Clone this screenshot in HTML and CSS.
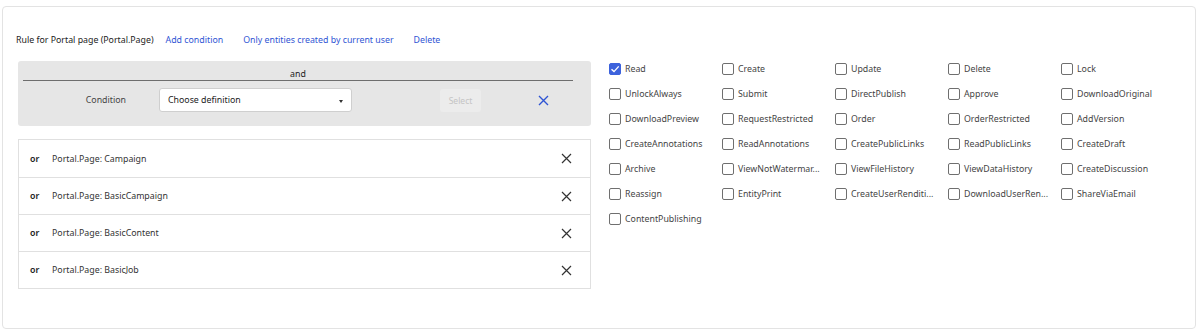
FILE: index.html
```html
<!DOCTYPE html>
<html>
<head>
<meta charset="utf-8">
<link rel="stylesheet" href="styles.css">
</head>
<body>
<div class="card">
  <div class="header">
    <span class="title">Rule for Portal page (Portal.Page)</span>
    <a class="link">Add condition</a>
    <a class="link">Only entities created by current user</a>
    <a class="link">Delete</a>
  </div>
  <div class="main">
    <div class="left">
      <div class="panel">
        <div class="and">and</div>
        <div class="cond-row">
          <span class="cond-label">Condition</span>
          <div class="dropdown"><span>Choose definition</span><span class="caret"></span></div>
          <button class="select-btn">Select</button>
          <svg class="x-blue" width="11" height="11" viewBox="0 0 11 11"><path d="M1 1L10 10M10 1L1 10" stroke="#2f55d4" stroke-width="1.4" fill="none"/></svg>
        </div>
      </div>
      <div class="list">
        <div class="row"><span class="or">or</span><span class="name">Portal.Page: Campaign</span><svg class="x" width="11" height="11" viewBox="0 0 11 11"><path d="M1 1L10 10M10 1L1 10" stroke="#333" stroke-width="1.2" fill="none"/></svg></div>
        <div class="row"><span class="or">or</span><span class="name">Portal.Page: BasicCampaign</span><svg class="x" width="11" height="11" viewBox="0 0 11 11"><path d="M1 1L10 10M10 1L1 10" stroke="#333" stroke-width="1.2" fill="none"/></svg></div>
        <div class="row"><span class="or">or</span><span class="name">Portal.Page: BasicContent</span><svg class="x" width="11" height="11" viewBox="0 0 11 11"><path d="M1 1L10 10M10 1L1 10" stroke="#333" stroke-width="1.2" fill="none"/></svg></div>
        <div class="row"><span class="or">or</span><span class="name">Portal.Page: BasicJob</span><svg class="x" width="11" height="11" viewBox="0 0 11 11"><path d="M1 1L10 10M10 1L1 10" stroke="#333" stroke-width="1.2" fill="none"/></svg></div>
      </div>
    </div>
    <div class="perms">
      <label class="perm"><span class="box checked"><svg width="10" height="10" viewBox="0 0 10 10"><path d="M1.5 5.2L4 7.6L8.7 2.4" stroke="#fff" stroke-width="1.4" fill="none"/></svg></span><span class="lbl">Read</span></label>
      <label class="perm"><span class="box"></span><span class="lbl">Create</span></label>
      <label class="perm"><span class="box"></span><span class="lbl">Update</span></label>
      <label class="perm"><span class="box"></span><span class="lbl">Delete</span></label>
      <label class="perm"><span class="box"></span><span class="lbl">Lock</span></label>
      <label class="perm"><span class="box"></span><span class="lbl">UnlockAlways</span></label>
      <label class="perm"><span class="box"></span><span class="lbl">Submit</span></label>
      <label class="perm"><span class="box"></span><span class="lbl">DirectPublish</span></label>
      <label class="perm"><span class="box"></span><span class="lbl">Approve</span></label>
      <label class="perm"><span class="box"></span><span class="lbl">DownloadOriginal</span></label>
      <label class="perm"><span class="box"></span><span class="lbl">DownloadPreview</span></label>
      <label class="perm"><span class="box"></span><span class="lbl">RequestRestricted</span></label>
      <label class="perm"><span class="box"></span><span class="lbl">Order</span></label>
      <label class="perm"><span class="box"></span><span class="lbl">OrderRestricted</span></label>
      <label class="perm"><span class="box"></span><span class="lbl">AddVersion</span></label>
      <label class="perm"><span class="box"></span><span class="lbl">CreateAnnotations</span></label>
      <label class="perm"><span class="box"></span><span class="lbl">ReadAnnotations</span></label>
      <label class="perm"><span class="box"></span><span class="lbl">CreatePublicLinks</span></label>
      <label class="perm"><span class="box"></span><span class="lbl">ReadPublicLinks</span></label>
      <label class="perm"><span class="box"></span><span class="lbl">CreateDraft</span></label>
      <label class="perm"><span class="box"></span><span class="lbl">Archive</span></label>
      <label class="perm"><span class="box"></span><span class="lbl">ViewNotWatermar...</span></label>
      <label class="perm"><span class="box"></span><span class="lbl">ViewFileHistory</span></label>
      <label class="perm"><span class="box"></span><span class="lbl">ViewDataHistory</span></label>
      <label class="perm"><span class="box"></span><span class="lbl">CreateDiscussion</span></label>
      <label class="perm"><span class="box"></span><span class="lbl">Reassign</span></label>
      <label class="perm"><span class="box"></span><span class="lbl">EntityPrint</span></label>
      <label class="perm"><span class="box"></span><span class="lbl">CreateUserRenditi...</span></label>
      <label class="perm"><span class="box"></span><span class="lbl">DownloadUserRen...</span></label>
      <label class="perm"><span class="box"></span><span class="lbl">ShareViaEmail</span></label>
      <label class="perm"><span class="box"></span><span class="lbl">ContentPublishing</span></label>
    </div>
  </div>
</div>
</body>
</html>
```
FILE: styles.css
```css
* { box-sizing: border-box; }
html, body { margin: 0; padding: 0; background: #fff; }
body {
  font-family: "Noto Sans", "Open Sans", sans-serif;
  font-size: 8.8px;
  color: #333;
}
.card {
  margin: 6px 0 0 2px;
  width: 1194px;
  height: 323px;
  border: 1px solid #e3e3e3;
  border-radius: 4px;
  padding: 25px 15px 0 13px;
}
.header {
  display: flex;
  align-items: center;
  height: 16px;
}
.title { color: #222; margin-right: 12px; }
.link { color: #2f55d4; margin-right: 20px; cursor: pointer; }
.main {
  display: flex;
  margin-top: 13px;
  gap: 18px;
  padding-left: 2px;
}
.left { width: 573px; flex: none; }
.panel {
  background: #e6e6e6;
  border-radius: 3px;
  height: 65px;
  padding: 6px 18px 0 5px;
}
.and {
  text-align: center;
  border-bottom: 1px solid #6e6e6e;
  height: 14px;
  line-height: 15px;
  color: #222;
}
.cond-row {
  display: flex;
  align-items: center;
  margin-top: 7px;
  height: 24px;
}
.cond-label {
  width: 103px;
  text-align: right;
  color: #444;
}
.dropdown {
  margin-left: 33px;
  width: 193px;
  height: 24px;
  background: #fff;
  border: 1px solid #cfcfcf;
  border-radius: 3px;
  display: flex;
  align-items: center;
  justify-content: space-between;
  padding: 0 8px 0 8px;
  color: #222;
}
.caret {
  width: 0; height: 0;
  border-left: 2.5px solid transparent;
  border-right: 2.5px solid transparent;
  border-top: 3px solid #333;
  margin-top: 2px;
}
.select-btn {
  margin-left: 88px;
  width: 41px;
  height: 23px;
  border: none;
  background: #ececec;
  border-radius: 3px;
  color: #c4c4c4;
  font-family: inherit;
  font-size: 8.5px;
  padding: 0;
}
.x-blue { margin-left: 57px; }
.list {
  margin-top: 13px;
  border: 1px solid #e0e0e0;
}
.row {
  display: flex;
  align-items: center;
  height: 37px;
  padding: 0 18px 0 11px;
  border-top: 1px solid #e0e0e0;
}
.row:first-child { border-top: none; }
.or { width: 22px; font-weight: 600; color: #222; }
.name { flex: 1; color: #333; }
.perms {
  display: grid;
  grid-template-columns: repeat(5, 113px);
  grid-auto-rows: 14px;
  row-gap: 11px;
  padding-top: 1px;
}
.perm {
  display: flex;
  align-items: center;
  gap: 4px;
  min-width: 0;
}
.box {
  flex: none;
  width: 12px;
  height: 12px;
  border: 1px solid #6f6f6f;
  border-radius: 2px;
  background: #fff;
  display: flex;
  align-items: center;
  justify-content: center;
}
.box.checked { background: #3c62dc; border-color: #3c62dc; }
.lbl {
  white-space: nowrap;
  color: #444;
}
```
